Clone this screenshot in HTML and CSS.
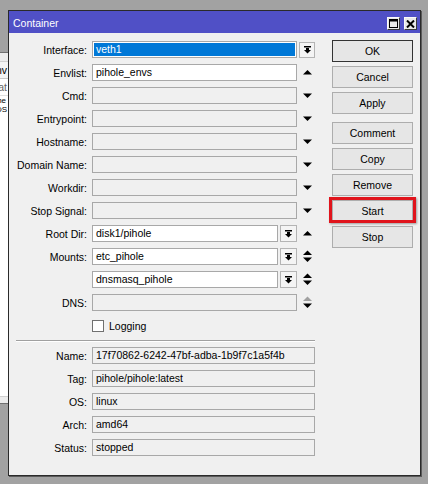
FILE: index.html
```html
<!DOCTYPE html>
<html>
<head>
<meta charset="utf-8">
<link rel="stylesheet" href="styles.css">
</head>
<body>
<div class="bgwin">
  <div class="bg-tool"></div>
  <div class="bg-hd">Env</div>
  <div class="bg-r">Stat</div>
  <div class="bg-r1">Name</div>
  <div class="bg-r2">DS</div>
  <div class="bg-fill"></div>
  <div class="bg-status"></div>
</div>

<div class="dialog">
  <div class="titlebar">
    <span class="title">Container</span>
    <div class="tbtns">
      <span class="tb"><svg width="9" height="9" viewBox="0 0 9 9"><rect x="0.5" y="0.5" width="8" height="8" fill="none" stroke="#000"/><rect x="0" y="0" width="9" height="2.5" fill="#000"/></svg></span>
      <span class="tb"><svg width="9" height="8" viewBox="0 0 9 8"><path d="M1 0.5L8 7.5M8 0.5L1 7.5" stroke="#000" stroke-width="2"/></svg></span>
    </div>
  </div>
  <div class="body">
    <div class="form">
      <div class="row"><span class="lbl">Interface:</span><div class="ctl"><div class="f sel"><span>veth1</span></div><span class="dd"><svg width="7" height="8" viewBox="0 0 7 8"><rect x="0" y="0" width="7" height="1.5"/><rect x="2" y="2" width="3" height="2"/><path d="M0 4h7L3.5 7.5z"/></svg></span></div></div>
      <div class="row"><span class="lbl">Envlist:</span><div class="ctl"><div class="f w">pihole_envs</div><svg class="ar" width="16" height="17" viewBox="0 0 16 17"><path d="M4 10.5h9L8.5 6z"/></svg></div></div>
      <div class="row"><span class="lbl">Cmd:</span><div class="ctl"><div class="f"></div><svg class="ar" width="16" height="17" viewBox="0 0 16 17"><path d="M4 6.5h9l-4.5 4.5z"/></svg></div></div>
      <div class="row"><span class="lbl">Entrypoint:</span><div class="ctl"><div class="f"></div><svg class="ar" width="16" height="17" viewBox="0 0 16 17"><path d="M4 6.5h9l-4.5 4.5z"/></svg></div></div>
      <div class="row"><span class="lbl">Hostname:</span><div class="ctl"><div class="f"></div><svg class="ar" width="16" height="17" viewBox="0 0 16 17"><path d="M4 6.5h9l-4.5 4.5z"/></svg></div></div>
      <div class="row"><span class="lbl">Domain Name:</span><div class="ctl"><div class="f"></div><svg class="ar" width="16" height="17" viewBox="0 0 16 17"><path d="M4 6.5h9l-4.5 4.5z"/></svg></div></div>
      <div class="row"><span class="lbl">Workdir:</span><div class="ctl"><div class="f"></div><svg class="ar" width="16" height="17" viewBox="0 0 16 17"><path d="M4 6.5h9l-4.5 4.5z"/></svg></div></div>
      <div class="row"><span class="lbl">Stop Signal:</span><div class="ctl"><div class="f"></div><svg class="ar" width="16" height="17" viewBox="0 0 16 17"><path d="M4 6.5h9l-4.5 4.5z"/></svg></div></div>
      <div class="row"><span class="lbl">Root Dir:</span><div class="ctl"><div class="f w">disk1/pihole</div><span class="dd dd2"><svg width="7" height="8" viewBox="0 0 7 8"><rect x="0" y="0" width="7" height="1.5"/><rect x="2" y="2" width="3" height="2"/><path d="M0 4h7L3.5 7.5z"/></svg></span><svg class="ar" width="16" height="17" viewBox="0 0 16 17"><path d="M4 10.5h9L8.5 6z"/></svg></div></div>
      <div class="row"><span class="lbl">Mounts:</span><div class="ctl"><div class="f w">etc_pihole</div><span class="dd dd2"><svg width="7" height="8" viewBox="0 0 7 8"><rect x="0" y="0" width="7" height="1.5"/><rect x="2" y="2" width="3" height="2"/><path d="M0 4h7L3.5 7.5z"/></svg></span><svg class="ar" width="16" height="17" viewBox="0 0 16 17"><path d="M4 7h9L8.5 2.5z"/><path d="M4 9.5h9L8.5 14z"/></svg></div></div>
      <div class="row"><span class="lbl"></span><div class="ctl"><div class="f w">dnsmasq_pihole</div><span class="dd dd2"><svg width="7" height="8" viewBox="0 0 7 8"><rect x="0" y="0" width="7" height="1.5"/><rect x="2" y="2" width="3" height="2"/><path d="M0 4h7L3.5 7.5z"/></svg></span><svg class="ar" width="16" height="17" viewBox="0 0 16 17"><path d="M4 7h9L8.5 2.5z"/><path d="M4 9.5h9L8.5 14z"/></svg></div></div>
      <div class="row"><span class="lbl">DNS:</span><div class="ctl"><div class="f"></div><svg class="ar" width="16" height="17" viewBox="0 0 16 17"><path d="M4 7h9L8.5 2.5z" fill="#a0a0a0"/><path d="M4 9.5h9L8.5 14z"/></svg></div></div>
      <div class="row"><span class="lbl"></span><label class="chk"><span class="box"></span>Logging</label></div>
      <div class="sep"></div>
      <div class="row"><span class="lbl">Name:</span><div class="ctl"><div class="f">17f70862-6242-47bf-adba-1b9f7c1a5f4b</div></div></div>
      <div class="row"><span class="lbl">Tag:</span><div class="ctl"><div class="f">pihole/pihole:latest</div></div></div>
      <div class="row"><span class="lbl">OS:</span><div class="ctl"><div class="f">linux</div></div></div>
      <div class="row"><span class="lbl">Arch:</span><div class="ctl"><div class="f">amd64</div></div></div>
      <div class="row"><span class="lbl">Status:</span><div class="ctl"><div class="f">stopped</div></div></div>
    </div>
    <div class="btns">
      <div class="btn def">OK</div>
      <div class="btn">Cancel</div>
      <div class="btn">Apply</div>
      <div class="btn grp">Comment</div>
      <div class="btn">Copy</div>
      <div class="btn">Remove</div>
      <div class="btn hl">Start</div>
      <div class="btn">Stop</div>
    </div>
  </div>
</div>
</body>
</html>
```

FILE: styles.css
```css
html, body {
  margin: 0;
  padding: 0;
}
body {
  width: 428px;
  height: 484px;
  overflow: hidden;
  position: relative;
  background: #a2a2a2;
  font: 10.5px "Liberation Sans", Arial, sans-serif;
  color: #000;
}

/* background window partly hidden behind the dialog */
.bgwin {
  position: absolute;
  left: -100px;
  top: 52px;
  width: 110px;
  height: 352px;
  background: #fff;
  border: 1px solid #707070;
  box-sizing: border-box;
  display: flex;
  flex-direction: column;
  text-align: right;
  color: #000;
}
.bg-tool {
  height: 8px;
  background: #ececec;
  border-bottom: 1px solid #d0d0d0;
}
.bg-hd {
  height: 16px;
  line-height: 16px;
  background: #f4f4f4;
  border-bottom: 1px solid #c8c8c8;
  padding-right: 2px;
}
.bg-r {
  height: 16px;
  line-height: 16px;
  color: #666;
  border-bottom: 1px solid #e0e0e0;
  padding-right: 2px;
}
.bg-r1 {
  height: 8px;
  line-height: 8px;
  font-size: 8px;
  overflow: hidden;
  padding-right: 3px;
  margin-top: 1px;
}
.bg-r2 {
  height: 9px;
  line-height: 9px;
  font-size: 8px;
  overflow: hidden;
  padding-right: 2px;
}
.bg-fill {
  flex: 1;
}
.bg-status {
  height: 6px;
  background: #ececec;
  border-top: 1px solid #d0d0d0;
}

/* dialog window */
.dialog {
  position: absolute;
  left: 8px;
  top: 10px;
  width: 413px;
  height: 466px;
  box-sizing: border-box;
  border: 1px solid #2a2a2a;
  box-shadow: 1px 1px 0 #5a5a5a;
  background: #f0f0f0;
  display: flex;
  flex-direction: column;
}
.titlebar {
  height: 22px;
  background: #5050c6;
  display: flex;
  align-items: center;
  justify-content: space-between;
  padding: 0 3px 0 4px;
}
.title {
  color: #fff;
  font-size: 10.5px;
  margin-top: 2px;
}
.tbtns {
  display: flex;
  gap: 4px;
  margin-top: 3px;
}
.tb {
  width: 13px;
  height: 13px;
  box-sizing: border-box;
  background: #e9e9e9;
  border: 1px solid;
  border-color: #fafafa #3a3a3a #3a3a3a #fafafa;
  display: flex;
  align-items: center;
  justify-content: center;
}

.body {
  display: flex;
  flex: 1;
}
.form {
  width: 306px;
  padding-top: 8px;
  display: flex;
  flex-direction: column;
}
.row {
  display: flex;
  align-items: center;
  height: 17px;
  margin-bottom: 6px;
}
.lbl {
  width: 83px;
  box-sizing: border-box;
  padding-right: 5px;
  text-align: right;
  white-space: nowrap;
}
.ctl {
  width: 223px;
  display: flex;
  align-items: center;
  gap: 2px;
}
.f {
  flex: 1;
  min-width: 0;
  height: 17px;
  box-sizing: border-box;
  border: 1px solid #a8a8a8;
  background: #f0f0f0;
  padding: 0 3px;
  line-height: 15px;
  white-space: nowrap;
  overflow: hidden;
}
.f.w {
  background: #fff;
}
.f.sel {
  background: #fff;
  padding: 1px;
}
.f.sel span {
  display: block;
  height: 13px;
  line-height: 13px;
  background: #0078d7;
  color: #fff;
  padding-left: 2px;
}
.dd {
  width: 16px;
  height: 16px;
  box-sizing: border-box;
  border: 1px solid #b4b4b4;
  background: #f4f4f4;
  display: flex;
  align-items: center;
  justify-content: center;
}
.dd2 {
  width: 17px;
  height: 17px;
}
.ar {
  flex: none;
  display: block;
}
.chk {
  display: flex;
  align-items: center;
  gap: 5px;
}
.box {
  width: 12px;
  height: 12px;
  box-sizing: border-box;
  border: 1px solid #707070;
  background: #fff;
}
.sep {
  height: 1px;
  background: #a0a0a0;
  border-bottom: 1px solid #fff;
  margin: 0 0 5px 7px;
}

/* buttons */
.btns {
  width: 81px;
  margin-left: 17px;
  padding-top: 7px;
  display: flex;
  flex-direction: column;
  gap: 4px;
}
.btn {
  position: relative;
  height: 22px;
  box-sizing: border-box;
  border: 1px solid #adadad;
  background: #e6e6e6;
  display: flex;
  align-items: center;
  justify-content: center;
}
.btn.def {
  border-color: #333;
}
.btn.grp {
  margin-top: 4px;
}
.btn.hl::after {
  content: "";
  position: absolute;
  top: -4px;
  left: -4px;
  right: -4px;
  bottom: -2px;
  border: 3px solid #e0141c;
  box-shadow: 1px 1px 2px rgba(0, 0, 0, 0.35);
}
```
